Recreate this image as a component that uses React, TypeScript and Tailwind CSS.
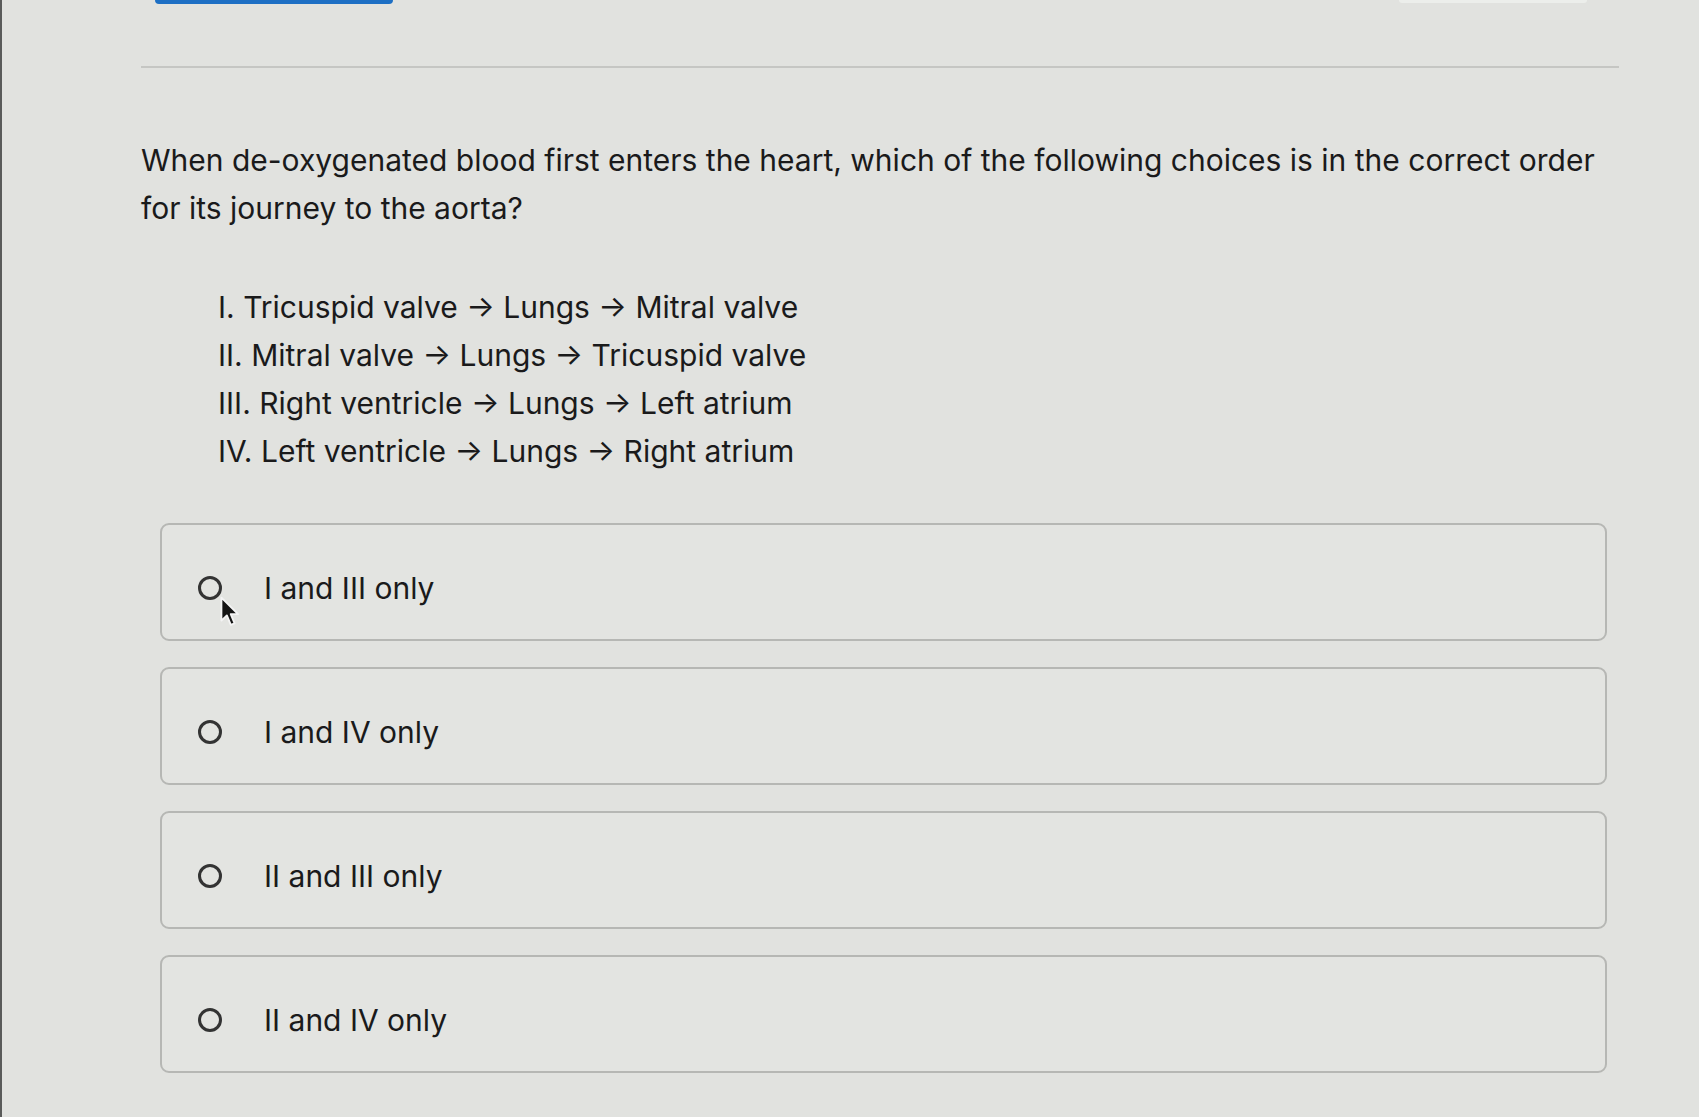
import React from "react";

/* ── Question data ──────────────────────────────────────────── */

const STATEMENTS = [
  "I. Tricuspid valve → Lungs → Mitral valve",
  "II. Mitral valve → Lungs → Tricuspid valve",
  "III. Right ventricle → Lungs → Left atrium",
  "IV. Left ventricle → Lungs → Right atrium",
];

const CHOICES = ["I and III only", "I and IV only", "II and III only", "II and IV only"];

function Cursor() {
  return (
    <svg
      className="absolute left-[58px] top-[71px]"
      width="20"
      height="32"
      viewBox="0 0 14 22"
    >
      <path
        d="M1 1 L1 17 L4.8 13.4 L7.6 20 L10.2 18.9 L7.5 12.5 L12.6 12.5 Z"
        fill="#151515"
        stroke="#f4f4f4"
        strokeWidth="1.3"
        strokeLinejoin="round"
      />
    </svg>
  );
}

export default function App() {
  return (
    <div
      className="min-h-screen w-full bg-[#e1e2df] border-l-2 border-[#5a5b5a] text-[#1a1a1b]"
      style={{ fontFamily: "Inter, 'Liberation Sans', sans-serif" }}
    >
      <div className="pl-[139px] pr-[60px]">
        {/* Buttons scrolled off the top */}
        <div className="flex justify-between h-[4px]">
          <div className="ml-[14px] w-[238px] h-[4px] rounded-b-md bg-[#1d6fc4]" />
          <div className="mr-[52px] w-[188px] h-[3px] rounded-b-md bg-[#eceeeb]" />
        </div>

        {/* Divider */}
        <div className="mt-[62px] mr-[20px] h-[2px] bg-[#c5c6c3]" />

        {/* Question */}
        <p className="mt-[68px] text-[30px] leading-[48px]">
          When de-oxygenated blood first enters the heart, which of the following choices is in the correct order
          <br />
          for its journey to the aorta?
        </p>

        {/* Statements */}
        <div className="mt-[51px] pl-[77px] text-[30px] leading-[48px]">
          {STATEMENTS.map((s) => (
            <div key={s}>{s}</div>
          ))}
        </div>

        {/* Choices */}
        <div className="mt-[48px] ml-[19px] mr-[32px] flex flex-col gap-[26px]">
          {CHOICES.map((c, i) => (
            <label
              key={c}
              className="relative flex items-center h-[118px] pl-[36px] pt-[12px] rounded-[9px] border-2 border-[#b6b7b4] bg-[#e3e4e1]"
            >
              <span className="w-[24px] h-[24px] rounded-full border-[3px] border-[#333333]" />
              <span className="ml-[42px] text-[30px] leading-[48px]">{c}</span>
              {i === 0 && <Cursor />}
            </label>
          ))}
        </div>
      </div>
    </div>
  );
}
